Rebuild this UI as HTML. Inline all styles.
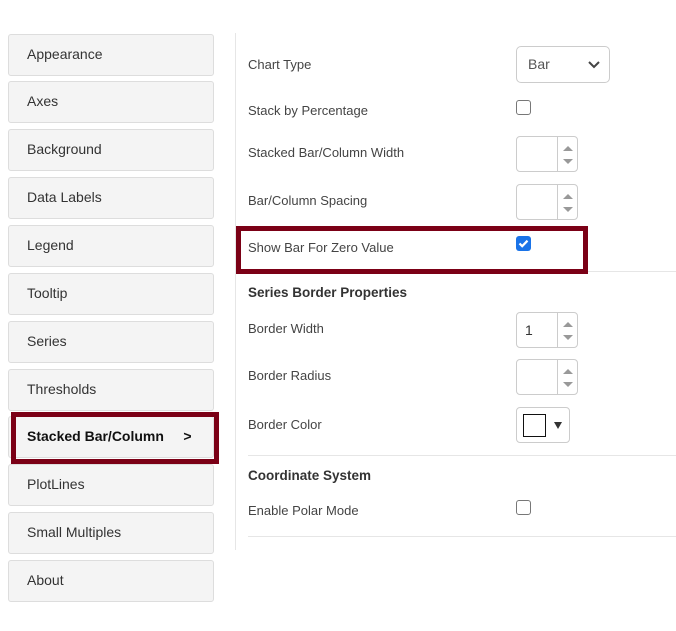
<!DOCTYPE html>
<html><head><style>
*{margin:0;padding:0;box-sizing:border-box}
body{width:676px;height:631px;background:#fff;font-family:"Liberation Sans",Arial,sans-serif;position:relative;overflow:hidden;color:#333}
.b{position:absolute;left:8px;width:206px;height:42px;background:#f4f4f4;border:1px solid #ddd;border-radius:3px;font-size:14px;color:#333;padding-left:18px;line-height:38px}
.hl{position:absolute;border:5px solid #7b0016}
.l{position:absolute;left:248px;font-size:13px;color:#444}
.h{position:absolute;left:248px;font-size:13.5px;font-weight:bold;color:#333}
.sep{position:absolute;left:248px;width:428px;height:1px;background:#e6e6e6}
.cb{position:absolute;left:516px;width:15px;height:15px;border:1.5px solid #777;border-radius:3px;background:#fff}
.sp{position:absolute;left:516px;width:62px;height:36px;border:1px solid #ccc;border-radius:4px;font-size:14px;color:#333;line-height:34px;padding-left:8px}
.sp:after{content:"";position:absolute;left:40px;top:0;bottom:0;width:1px;background:#ccc}
.up,.dn{position:absolute;left:46px;width:0;height:0;border-left:5px solid transparent;border-right:5px solid transparent}
.up{top:9px;border-bottom:5px solid #999}
.dn{top:22px;border-top:5px solid #999}
</style></head><body>
<div style="position:absolute;left:235px;top:33px;width:1px;height:517px;background:#e6e6e6"></div>
<div class="b" style="top:34px">Appearance</div>
<div class="b" style="top:81px">Axes</div>
<div class="b" style="top:129px">Background</div>
<div class="b" style="top:177px">Data Labels</div>
<div class="b" style="top:225px">Legend</div>
<div class="b" style="top:273px">Tooltip</div>
<div class="b" style="top:321px">Series</div>
<div class="b" style="top:369px">Thresholds</div>
<div class="b" style="top:416px;font-weight:bold;color:#111">Stacked Bar/Column &nbsp;&nbsp;&nbsp;&nbsp;&gt;</div>
<div class="b" style="top:464px">PlotLines</div>
<div class="b" style="top:512px">Small Multiples</div>
<div class="b" style="top:560px">About</div>
<div class="hl" style="left:11px;top:412px;width:208px;height:52px"></div>

<div class="l" style="top:57px">Chart Type</div>
<div style="position:absolute;left:516px;top:46px;width:94px;height:37px;border:1px solid #ccc;border-radius:5px;font-size:14px;line-height:35px;padding-left:11px;color:#555">Bar
<svg style="position:absolute;left:70px;top:13px" width="14" height="9" viewBox="0 0 14 9"><path d="M2 2l5 5 5-5" stroke="#444" stroke-width="2" fill="none"/></svg></div>
<div class="l" style="top:103px">Stack by Percentage</div>
<div class="cb" style="top:100px"></div>
<div class="l" style="top:145px">Stacked Bar/Column Width</div>
<div class="sp" style="top:136px"><i class="up"></i><i class="dn"></i></div>
<div class="l" style="top:193px">Bar/Column Spacing</div>
<div class="sp" style="top:184px"><i class="up"></i><i class="dn"></i></div>
<div class="l" style="top:240px">Show Bar For Zero Value</div>
<div style="position:absolute;left:516px;top:236px;width:15px;height:15px;background:#1a73e8;border-radius:3px"><svg width="15" height="15" viewBox="0 0 15 15"><path d="M3.5 7.5l2.7 2.7 5.3-5.5" stroke="#fff" stroke-width="2.2" fill="none"/></svg></div>
<div class="hl" style="left:236px;top:226px;width:352px;height:48px"></div>
<div class="sep" style="top:271px;left:588px;width:88px"></div>
<div class="h" style="top:285px">Series Border Properties</div>
<div class="l" style="top:321px">Border Width</div>
<div class="sp" style="top:312px">1<i class="up"></i><i class="dn"></i></div>
<div class="l" style="top:368px">Border Radius</div>
<div class="sp" style="top:359px"><i class="up"></i><i class="dn"></i></div>
<div class="l" style="top:417px">Border Color</div>
<div style="position:absolute;left:516px;top:407px;width:54px;height:36px;border:1px solid #ccc;border-radius:4px">
<div style="position:absolute;left:6px;top:6px;width:23px;height:23px;border:1px solid #111"></div>
<div style="position:absolute;left:37px;top:14px;border-left:4px solid transparent;border-right:4px solid transparent;border-top:7px solid #333"></div></div>
<div class="sep" style="top:455px"></div>
<div class="h" style="top:468px">Coordinate System</div>
<div class="l" style="top:503px">Enable Polar Mode</div>
<div class="cb" style="top:500px"></div>
<div class="sep" style="top:536px"></div>
</body></html>
